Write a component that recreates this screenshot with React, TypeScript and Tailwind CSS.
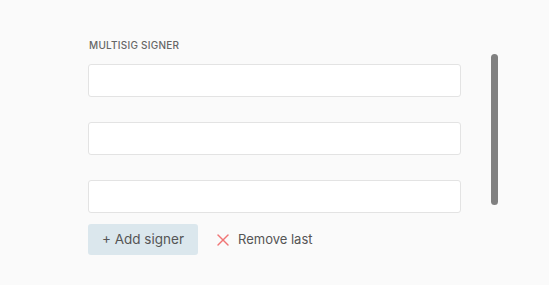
import { X } from "lucide-react";

const signers = ["", "", ""];

const SignerInput = () => (
  <input
    type="text"
    className="block h-[33px] w-full rounded-[3px] border border-[#e3e3e3] bg-white px-3 text-sm outline-none"
  />
);

export default function App() {
  return (
    <div
      className="flex h-[285px] w-[549px] overflow-hidden bg-[#fafafa]"
      style={{ fontFamily: "Inter, 'Open Sans', sans-serif" }}
    >
      <div className="ml-[88px] mt-[39px] w-[373px] shrink-0">
        <div className="mb-[12px] pl-px text-[10px] font-medium uppercase leading-[13px] tracking-[0.25px] text-[#666]">
          Multisig signer
        </div>
        <div className="flex flex-col gap-[25px]">
          {signers.map((_, i) => (
            <SignerInput key={i} />
          ))}
        </div>
        <div className="mt-[11px] flex items-center">
          <button className="h-[31px] w-[110px] rounded-[3px] bg-[#dbe7ed] text-[13.5px] text-[#555]">
            + Add signer
          </button>
          <button className="ml-[15px] flex items-center text-[13px] text-[#555]">
            <X className="mr-[5px] h-[20px] w-[20px] text-[#f07575]" strokeWidth={1.7} />
            Remove last
          </button>
        </div>
      </div>
      <div className="ml-[30px] mt-[54px] h-[151px] w-[7px] shrink-0 rounded-full bg-[#808080]" />
      <div className="ml-[51px] mt-[64px] h-[42px] w-[2px] shrink-0 rounded-l-[3px] border-l border-t border-b border-[#ebebeb] bg-white" />
    </div>
  );
}
